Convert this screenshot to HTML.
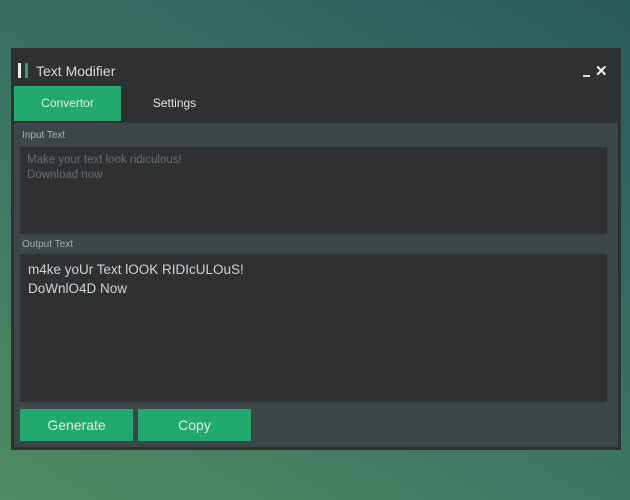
<!DOCTYPE html>
<html><head><style>
body{margin:0;width:630px;height:500px;overflow:hidden;background:linear-gradient(30deg,#4d8c62 0%,#3a7563 45%,#2a5b5b 100%);font-family:"Liberation Sans",sans-serif;position:relative}
.win{position:absolute;left:11px;top:48px;width:610px;height:402px;background:#2e3032}
.abs{position:absolute}
.panel{left:3px;top:75px;width:604px;height:324px;background:#3c4548}
.ta{background:#2e3032;position:absolute}
.btn{position:absolute;background:#22a96e;color:#e4ece7;font-size:14px;text-align:center;line-height:32px;height:32px;width:113px;top:361px}
</style></head><body>
<div class="win">
 <div class="abs" style="left:7px;top:15px;width:3px;height:15px;background:#eee"></div>
 <div class="abs" style="left:14px;top:15px;width:3px;height:15px;background:#22a96e"></div>
 <div class="abs" style="left:25px;top:15px;font-size:14px;color:#d8d8d8">Text Modifier</div>
 <div class="abs" style="left:572px;top:27px;width:7px;height:2px;background:#ddd"></div>
 <div class="abs" style="left:584px;top:14px;font-size:15px;font-weight:bold;color:#eee">✕</div>
 <div class="abs" style="left:3px;top:38px;width:107px;height:35px;background:#22a96e;color:#e4ece7;font-size:12px;text-align:center;line-height:35px">Convertor</div>
 <div class="abs" style="left:110px;top:38px;width:107px;height:35px;color:#e4e4e4;font-size:12px;text-align:center;line-height:35px">Settings</div>
 <div class="abs panel">
  <div class="abs" style="left:8px;top:7px;font-size:10px;color:#a8aeb0">Input Text</div>
  <div class="ta" style="left:6px;top:24px;width:587px;height:87px">
   <div style="padding:6px 7px;font-size:11.5px;line-height:15px;color:#6a6e70">Make your text look ridiculous!<br>Download now</div>
  </div>
  <div class="abs" style="left:8px;top:116px;font-size:10px;color:#a8aeb0">Output Text</div>
  <div class="ta" style="left:6px;top:131px;width:587px;height:148px">
   <div style="padding:6px 8px;font-size:13.5px;line-height:19px;color:#d0d4d6">m4ke yoUr Text lOOK RIDIcULOuS!<br>DoWnlO4D Now</div>
  </div>
 </div>
 <div class="btn" style="left:9px">Generate</div>
 <div class="btn" style="left:127px">Copy</div>
</div>
</body></html>
